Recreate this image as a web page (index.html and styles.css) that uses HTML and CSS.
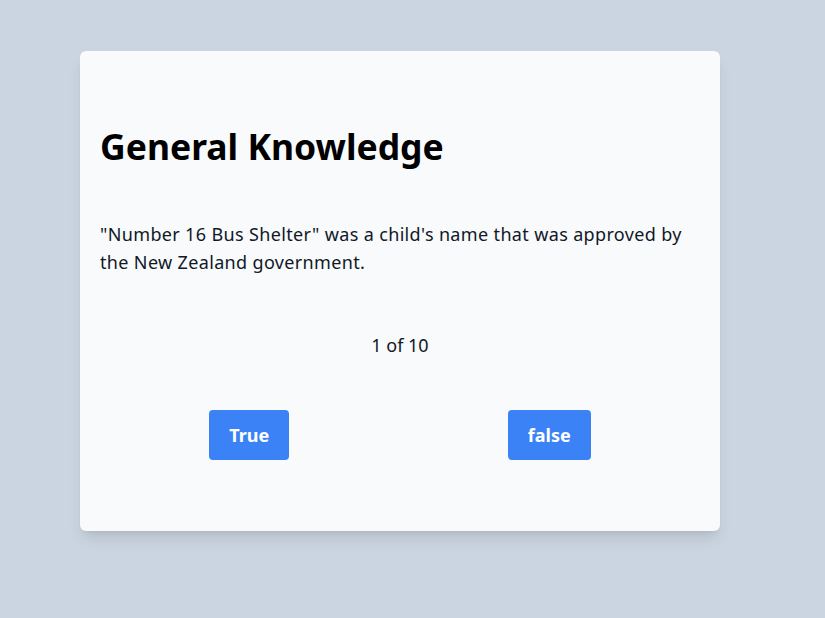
FILE: index.html
```html
<!DOCTYPE html>
<html lang="en">
<head>
<meta charset="utf-8">
<title>Quiz</title>
<link rel="stylesheet" href="styles.css">
</head>
<body>
<main class="card">
  <h1 class="title">General Knowledge</h1>
  <p class="question">"Number 16 Bus Shelter" was a child's name that was approved by the New Zealand government.</p>
  <p class="count">1 of 10</p>
  <div class="answers">
    <button class="btn">True</button>
    <button class="btn">false</button>
  </div>
</main>
</body>
</html>
```
FILE: styles.css
```css
html, body {
  margin: 0;
  padding: 0;
}
body {
  background: #cbd5e1;
  font-family: "Noto Sans", "Open Sans", sans-serif;
  color: #111827;
  min-height: 618px;
  padding-top: 51px;
  padding-left: 80px;
  box-sizing: border-box;
}
.card {
  width: 640px;
  height: 480px;
  box-sizing: border-box;
  background: #f8fafc;
  border-radius: 6px;
  box-shadow: 0 10px 15px -3px rgba(0,0,0,0.1), 0 4px 6px -4px rgba(0,0,0,0.1);
  padding: 75px 20px 0;
  display: flex;
  flex-direction: column;
}
.title {
  margin: 0;
  font-size: 35.5px;
  line-height: 40px;
  font-weight: 700;
  color: #000;
}
.question {
  margin: 54px 0 0;
  font-size: 18px;
  line-height: 28px;
  letter-spacing: 0.35px;
}
.count {
  margin: 55px 0 0;
  font-size: 18px;
  line-height: 28px;
  text-align: center;
}
.answers {
  margin-top: 51px;
  display: flex;
  justify-content: space-around;
}
.btn {
  font-family: inherit;
  background: #3b82f6;
  color: #fff;
  border: none;
  border-radius: 4px;
  font-size: 18px;
  font-weight: 700;
  line-height: 28px;
  padding: 11px 20px;
}
```
